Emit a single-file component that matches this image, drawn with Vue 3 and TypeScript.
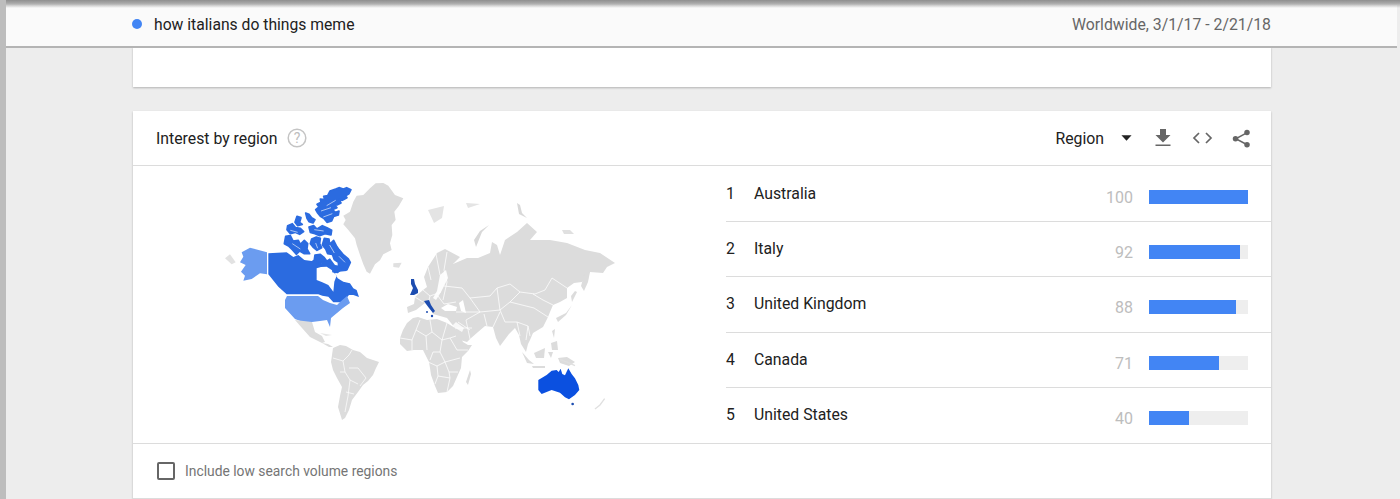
<script setup lang="ts">
interface Row { rank: number; name: string; value: number }
const rows: Row[] = [
  { rank: 1, name: 'Australia', value: 100 },
  { rank: 2, name: 'Italy', value: 92 },
  { rank: 3, name: 'United Kingdom', value: 88 },
  { rank: 4, name: 'Canada', value: 71 },
  { rank: 5, name: 'United States', value: 40 },
]
// Canadian Arctic islands, in the 3x coordinates of the map's north-west tile
const arctic: string[] = [
  '345,48 362,42 372,38 385,42 395,38 408,44 402,56 392,62 396,68 382,76 372,72 378,84 366,90 356,86 366,98 352,104 362,112 372,108 370,120 356,124 350,138 336,142 326,130 316,124 308,114 302,104 312,96 306,88 318,82 316,72 330,74 326,64 338,62',
  '272,114 282,118 290,128 300,134 294,144 282,140 276,130',
  '246,124 258,128 254,142 262,148 248,152 240,142',
  '218,152 232,146 242,158 256,160 266,170 254,178 240,172 226,176 216,164',
  '282,156 296,152 306,162 322,152 336,158 350,166 348,180 330,176 314,182 300,176 286,172',
  '212,184 226,182 234,198 250,196 256,208 268,196 278,206 276,222 284,236 268,236 254,228 244,238 232,224 222,214 208,206',
  '290,192 304,186 316,190 314,206 320,218 306,226 294,216 286,206',
  '328,190 342,192 344,208 356,196 364,212 372,224 384,238 400,252 406,262 396,284 384,278 372,284 370,262 358,254 352,238 338,236 332,222 322,210',
  '300,240 316,238 328,248 338,262 322,262 308,268 298,254',
  '356,276 378,284 368,292 354,290',
]
</script>

<template>
  <div class="page">
    <header class="topbar">
      <div class="term"><span class="dot"></span><span>how italians do things meme</span></div>
      <div class="scope">Worldwide, 3/1/17 - 2/21/18</div>
    </header>
    <main class="content">
      <section class="card stub"></section>
      <section class="card region">
        <div class="head">
          <div class="title">
            <span>Interest by region</span>
            <svg class="help" viewBox="0 0 20 20" width="20" height="20">
              <circle cx="10" cy="10" r="8.8" fill="none" stroke="#c4c4c4" stroke-width="1.5" />
              <text x="10" y="14.6" text-anchor="middle" class="q">?</text>
            </svg>
          </div>
          <div class="tools">
            <span class="select">Region</span>
            <svg class="caret" viewBox="0 0 12 6" width="11" height="6"><path d="M0.5 0h11L6 6z" fill="#222" /></svg>
            <svg class="tool t-dl" viewBox="0 0 16 18" width="16" height="18"><path d="M5 0h6v6h4.5L8 13.5 .5 6H5zM.5 15.5h15V17H.5z" fill="#666" /></svg>
            <svg class="tool t-code" viewBox="0 0 21 12" width="21" height="12"><path d="M7 1L2 6l5 5M14 1l5 5-5 5" fill="none" stroke="#666" stroke-width="1.7" /></svg>
            <svg class="tool t-share" viewBox="0 0 20 20" width="19" height="19"><path d="M15.5 4L4 10.3l11.5 6" fill="none" stroke="#666" stroke-width="1.6" /><circle cx="15.8" cy="3.6" r="2.9" fill="#666" /><circle cx="3.7" cy="10.3" r="2.9" fill="#666" /><circle cx="15.8" cy="16.6" r="2.9" fill="#666" /></svg>
          </div>
        </div>
        <div class="body">
          <div class="map">
            <svg viewBox="133 166 570 278" width="570" height="278">
              <g transform="translate(215,175) scale(.3333)">
                <!-- Greenland -->
                <polygon fill="#dcdcdc" points="385,122 405,110 415,80 425,62 445,60 465,40 482,25 505,24 520,32 540,60 565,70 552,92 538,110 542,135 530,150 532,180 525,205 530,225 505,238 495,256 480,268 465,296 455,290 445,268 435,240 425,210 420,190 400,165 385,148 392,135" />
                <polygon points="30,250 45,238 62,262 50,268" fill="#e2e2e2" />
                <polygon points="535,265 560,263 552,278 535,276" fill="#e0e0e0" />
                <polygon points="80,232 105,218 156,232 156,298 135,295 110,312 85,317 90,302 78,290 92,270 75,262 85,245" fill="#6b9cf0" />
                <path fill-rule="evenodd" fill="#2b6be0" d="M160 235L215 232 235 246 250 240 268 255 290 258 305 248 320 265 345 250 360 270 375 272 400 262 395 288 372 290 360 295 368 310 385 320 405 325 415 340 425 345 432 366 415 360 402 360 392 372 385 382 355 382 340 365 322 362 310 358 215 358 190 335 160 298ZM305 280L318 276 335 275 350 285 365 302 358 320 355 350 340 330 322 322 305 315Z" />
                <polygon v-for="p in arctic" :key="p" :points="p" fill="#2b6be0" stroke="#2b6be0" stroke-width="5" stroke-linejoin="round" />
                <g stroke="#fff" stroke-width="1.8" fill="none">
                  <path d="M335 92L362 76M318 108L348 98M325 126L352 116M226 166L248 172M298 164L326 168M232 206L256 222M302 204L308 220M344 210L358 234M372 244L390 262" />
                </g>
              </g>
              <!-- United States -->
              <polygon points="287,296 318,296 323,300 330,303 337,305 340,302 347,296 350,303 343,308 337,313 331,318 330,327 327,320 320,321 312,322 303,322 295,319 285,308 285,300" fill="#6b9cf0" />
              <!-- Mexico and Central America -->
              <polygon points="295,320 312,322 315,332 322,336 325,342 322,343 310,337 302,328" fill="#dcdcdc" />
              <polygon points="322,343 328,344 333,347 329,347" fill="#dcdcdc" />
              <polygon points="320,333 332,335 326,336" fill="#e6e6e6" />
              <!-- South America -->
              <polygon points="333,348 340,345 346,346 353,350 360,352 367,358 379,362 376,368 373,375 368,381 363,385 358,392 352,400 349,410 345,418 342,420 338,407 340,396 342,387 337,378 333,370 331,362 332,355" fill="#dcdcdc" />
              <path d="M333 358L343 361 349 355 352 350M343 361L345 372 350 380 348 396 345 412M349 368L358 368 366 378 360 386M340 372L345 372M350 380L358 384M346 392L354 394" stroke="#fff" stroke-width=".7" fill="none" />
              <!-- Eurasia -->
              <polygon fill="#dcdcdc" points="407,307 414,304 415,297 423,290 427,287 424,277 428,267 437,253 445,249 460,257 453,264 467,258 478,258 490,253 492,242 497,245 500,255 505,240 517,232 527,223 537,232 530,240 550,240 567,243 585,250 600,253 615,263 607,267 603,273 590,272 582,282 574,283 567,288 567,298 560,302 553,305 550,312 548,317 543,327 533,333 530,340 528,344 526,352 521,344 519,335 515,328 509,334 500,346 496,338 493,327 485,326 478,332 470,339 467,342 460,340 455,328 447,318 440,316 433,314 430,306 425,303 416,310 408,313" />
              <!-- Inner seas -->
              <polygon fill="#fff" points="433,298 437,291 440,275 446,270 448,278 441,292 436,300" opacity=".9" />
              <polygon fill="#fff" points="441,308 448,304 457,307 456,311 445,311" />
              <polygon fill="#fff" points="459,303 463,300 466,313 461,311" />
              <polygon fill="#fff" points="452,326 456,322 464,328 462,332" opacity=".8" />
              <!-- Northern islands -->
              <polygon fill="#e4e4e4" points="428,210 444,206 442,218 434,223" />
              <polygon fill="#e4e4e4" points="466,203 480,204 468,208" />
              <polygon fill="#d8d8d8" points="474,240 480,231 489,225 482,232 476,247" />
              <polygon fill="#d8d8d8" points="517,203 520,205 522,213 527,218 519,214" />
              <polygon fill="#e0e0e0" points="562,230 570,230 574,234 564,234" />
              <polygon fill="#dcdcdc" points="585,272 590,272 588,282 584,291 581,286" />
              <!-- Japan, islands of South-East Asia -->
              <polygon fill="#dcdcdc" points="556,318 566,313 572,305 566,315 558,322" />
              <polygon fill="#dcdcdc" points="571,296 575,291 577,292 572,302" />
              <polygon fill="#dcdcdc" points="552,331 555,329 554,338" />
              <polygon fill="#dcdcdc" points="551,343 557,341 558,350 552,350" />
              <polygon fill="#dcdcdc" points="522,352 529,360 534,364 527,363" />
              <polygon fill="#dcdcdc" points="534,353 545,348 544,358 536,358" />
              <polygon fill="#dcdcdc" points="548,352 553,352 551,358" />
              <polygon fill="#dcdcdc" points="532,366 545,366 545,368 533,368" />
              <polygon fill="#dcdcdc" points="558,358 567,357 575,362 569,366 560,363" />
              <!-- Africa -->
              <polygon fill="#dcdcdc" points="400,338 403,330 407,323 413,318 418,317 427,320 437,319 447,323 455,328 460,336 463,342 468,345 472,345 468,351 462,357 461,368 457,377 453,386 447,392 438,393 435,386 431,375 430,368 429,362 423,350 414,350 407,351 400,344" />
              <polygon fill="#dcdcdc" points="466,382 470,370 471,374 468,385" />
              <!-- Borders -->
              <g stroke="#fff" stroke-width=".75" fill="none">
                <path d="M428 267L431 280M436 254L440 275M447 252L444 270 447 282 443 300" />
                <path d="M415 297L423 302M423 290L430 296 441 292M430 296L428 304M438 296L444 304 456 302" />
                <path d="M444 286L462 288 470 298 490 296 497 288 510 284 520 292 535 294 545 290 552 278 567 288" />
                <path d="M470 298L480 312 500 310 510 302 520 292M497 288L500 310M480 312L466 320 470 339" />
                <path d="M500 310L505 322 517 322 528 326 530 336M510 302L534 308 548 317M533 294L543 300 553 305" />
                <path d="M517 322L520 336M528 326L526 340M493 327L500 312M487 326L484 314" />
                <path d="M456 312L470 312 480 312M458 322L470 330M455 328L472 328" />
                <path d="M400 338L412 340 416 330 420 320M412 340L412 350M416 330L426 336 432 332 430 320M426 336L427 350M432 332L442 340 447 323M442 340L450 338 456 336M442 340L440 352 433 352 430 360" />
                <path d="M440 352L445 362 437 366 438 376 435 384M445 362L460 358M445 362L449 372 458 372M438 376L450 378 447 392M449 372L450 378M428 362L437 366" />
                <path d="M450 338L457 350 468 350" />
              </g>
              <!-- UK and Italy -->
              <polygon fill="#1d4db0" points="411,279 414,279 415,284 418,290 418,293 414,295 410,295 413,288 411,284" />
              <polygon fill="#1d4db0" points="424,301 429,300 431,305 435,311 433,313 429,308 426,304" />
              <circle cx="427" cy="312" r="1" fill="#1d4db0" />
              <circle cx="432" cy="316" r="1.2" fill="#1d4db0" />
              <!-- Oceania -->
              <g transform="translate(270,300) scale(.3333)">
                <polygon fill="#0b50e0" points="805,240 830,225 845,212 860,210 866,216 872,206 877,222 885,226 895,205 905,222 915,235 925,255 928,270 915,285 897,298 885,292 870,278 845,270 815,282 805,270" />
                <circle cx="908" cy="312" r="4" fill="#1d4db0" />
                <path d="M975 327L990 315 1004 296" stroke="#e0e0e0" stroke-width="4" fill="none" />
                <path d="M870 178L900 190 915 197" stroke="#e0e0e0" stroke-width="4" fill="none" />
              </g>
            </svg>
          </div>
          <ol class="list">
            <li v-for="r in rows" :key="r.rank" class="row">
              <span class="rank">{{ r.rank }}</span>
              <span class="name">{{ r.name }}</span>
              <span class="value">{{ r.value }}</span>
              <span class="track"><span class="fill" :style="{ width: r.value + '%' }"></span></span>
            </li>
          </ol>
        </div>
        <div class="foot">
          <span class="check"></span>
          <span class="lbl">Include low search volume regions</span>
        </div>
      </section>
    </main>
  </div>
</template>

<style>
html, body { margin: 0; background: #ededed; overflow: hidden; }
</style>

<style scoped>
.page {
  position: relative;
  width: 1400px;
  height: 499px;
  overflow: hidden;
  background: #ededed;
  font-family: Roboto, "Liberation Sans", sans-serif;
  display: flex;
  flex-direction: column;
  box-sizing: border-box;
  border-left: 6px solid #bdbdbd;
  padding-top: 5px;
}
.page::before {
  content: "";
  position: absolute;
  left: -6px;
  right: 0;
  top: 0;
  height: 8px;
  background: linear-gradient(#8f8f8f, #a8a8a8 40%, rgba(250,250,250,0));
  z-index: 3;
}
.topbar {
  position: relative;
  z-index: 2;
  flex: none;
  margin-right: 3px;
  background: #fafafa;
  border-bottom: 2px solid #b4b4b4;
  box-sizing: border-box;
  height: 43px;
  display: flex;
  justify-content: space-between;
  align-items: center;
  padding: 0 126px 3px 126px;
}
.term { display: flex; align-items: center; gap: 12px; font-size: 15.7px; color: #212121; }
.dot { width: 10px; height: 10px; border-radius: 50%; background: #4285f4; }
.scope { font-size: 15.8px; color: #666; }
.content { padding: 0 129px 0 127px; display: flex; flex-direction: column; gap: 24px; margin-top: -1px; }
.card { background: #fff; box-shadow: 0 1px 2px rgba(0,0,0,.25); }
.stub { height: 40px; flex: none; }
.region { flex: none; }
.head {
  height: 54px;
  border-bottom: 1px solid #dcdcdc;
  display: flex;
  align-items: center;
  justify-content: space-between;
  padding: 0 20px 0 23px;
}
.title { display: flex; align-items: center; gap: 9px; font-size: 15.8px; color: #212121; }
.help { display: block; }
.q { font: 14px Roboto, sans-serif; fill: #bdbdbd; }
.tools { display: flex; align-items: center; font-size: 15.8px; color: #212121; }
.caret { margin-left: 17px; display: block; }
.tool { display: block; }
.t-dl { margin-left: 23px; }
.t-code { margin-left: 21px; }
.t-share { margin-left: 19px; }
.body { display: flex; height: 277px; }
.map { width: 593px; flex: none; }
.map svg { display: block; filter: blur(.35px); }
.list { list-style: none; margin: 0; padding: 1px 0 0; flex: 1; display: flex; flex-direction: column; }
.row {
  height: 55.3px;
  box-sizing: border-box;
  border-bottom: 1px solid #dcdcdc;
  display: flex;
  font-size: 15.8px;
  color: #212121;
  position: relative;
}
.row:last-child { border-bottom: none; }
.rank { width: 28px; padding-top: 17px; }
.name { flex: 1; padding-top: 17px; }
.value { padding-top: 21px; color: #bdbdbd; font-size: 16px; width: 40px; text-align: right; margin-right: 16px; }
.track { width: 99px; height: 14px; margin: 23px 23px 0 0; background: #eee; display: block; }
.fill { display: block; height: 100%; background: #4285f4; }
.foot {
  border-top: 1px solid #dcdcdc;
  border-bottom: 1px solid #dcdcdc;
  height: 54px;
  display: flex;
  align-items: center;
  padding-left: 24px;
  gap: 10px;
}
.check { width: 14px; height: 14px; border: 2px solid #666; border-radius: 2px; display: block; margin-top: -1px; }
.lbl { font-size: 13.85px; color: #757575; }
</style>
